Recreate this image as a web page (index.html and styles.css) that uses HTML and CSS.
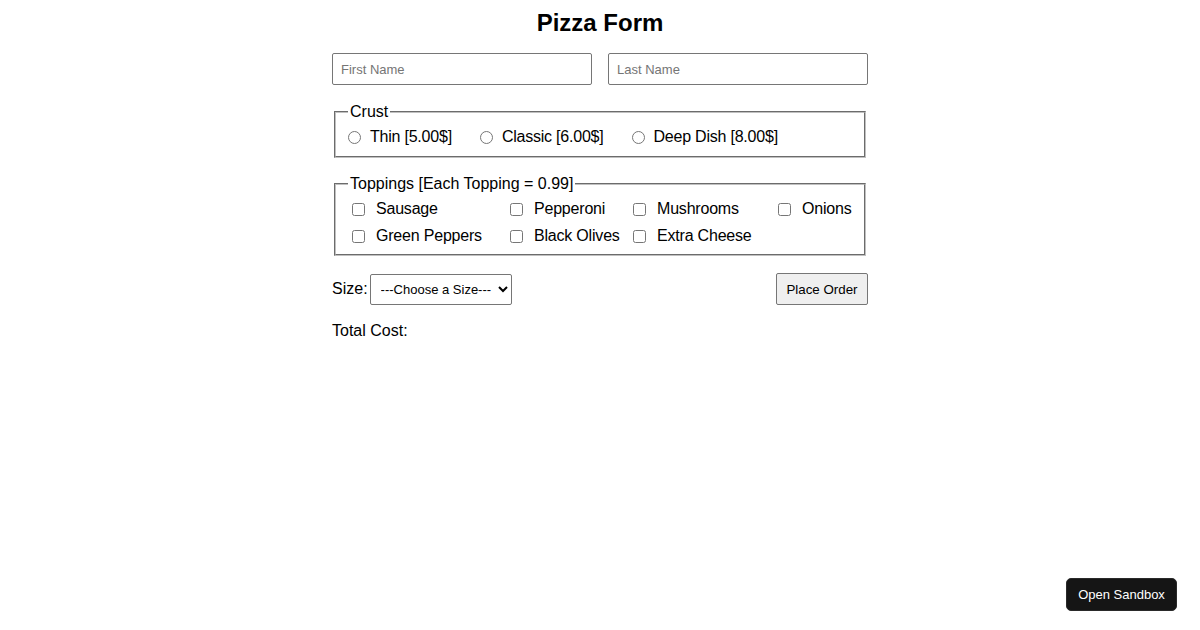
FILE: index.html
```html
<!DOCTYPE html>
<html>
<head>
<meta charset="utf-8">
<link rel="stylesheet" href="styles.css">
</head>
<body>
<div class="page">
  <h1 class="title">Pizza Form</h1>
  <div class="names">
    <input class="name-input" type="text" placeholder="First Name">
    <input class="name-input" type="text" placeholder="Last Name">
  </div>
  <fieldset class="box crust">
    <legend class="legend">Crust</legend>
    <label class="radio-item"><input type="radio" name="crust" class="radio"> Thin [5.00$]</label>
    <label class="radio-item"><input type="radio" name="crust" class="radio"> Classic [6.00$]</label>
    <label class="radio-item"><input type="radio" name="crust" class="radio"> Deep Dish [8.00$]</label>
  </fieldset>
  <fieldset class="box toppings">
    <legend class="legend">Toppings [Each Topping = 0.99]</legend>
    <div class="topping-grid">
      <label class="check-item"><input type="checkbox" class="check">Sausage</label>
      <label class="check-item"><input type="checkbox" class="check">Pepperoni</label>
      <label class="check-item"><input type="checkbox" class="check">Mushrooms</label>
      <label class="check-item"><input type="checkbox" class="check">Onions</label>
      <label class="check-item"><input type="checkbox" class="check">Green Peppers</label>
      <label class="check-item"><input type="checkbox" class="check">Black Olives</label>
      <label class="check-item"><input type="checkbox" class="check">Extra Cheese</label>
    </div>
  </fieldset>
  <div class="order-row">
    <label class="size-label">Size:
      <select class="size-select">
        <option>---Choose a Size---</option>
      </select>
    </label>
    <button class="order-btn" type="button">Place Order</button>
  </div>
  <div class="total">Total Cost:</div>
</div>
<button class="sandbox-btn" type="button">Open Sandbox</button>
</body>
</html>
```
FILE: styles.css
```css
html, body {
  margin: 0;
  padding: 0;
  background: #fff;
}
body {
  font-family: "Liberation Sans", Arial, sans-serif;
  font-size: 16px;
  color: #000;
}
.page {
  width: 536px;
  margin: 0 auto;
  padding-top: 9px;
}
.title {
  font-size: 24px;
  font-weight: bold;
  text-align: center;
  margin: 0 0 16px;
  line-height: 28px;
}
.names {
  display: flex;
  gap: 16px;
  margin-bottom: 18px;
}
.name-input {
  flex: 1;
  box-sizing: border-box;
  height: 32px;
  margin: 0;
  padding: 0 8px;
  border: 1px solid #767676;
  border-radius: 2px;
  font-family: "Liberation Sans", Arial, sans-serif;
  font-size: 13px;
}
.name-input::placeholder {
  color: #757575;
}
.box {
  margin: 0 2px 17px;
  border: 2px groove #c0c0c0;
}
.legend {
  padding: 0 2px;
  font-size: 16px;
  line-height: 18px;
}
.crust {
  display: flex;
  padding: 6px 12px 9px;
}
.toppings {
  padding: 6px 12px 8px;
}
.radio-item {
  display: inline-flex;
  align-items: center;
  margin-right: 28px;
  line-height: 20px;
  letter-spacing: -0.22px;
}
.radio {
  margin: 0 9px 0 0;
  width: 13px;
  height: 13px;
}
.topping-grid {
  display: grid;
  grid-template-columns: 158px 123px 145px auto;
  row-gap: 7px;
  padding-left: 4px;
}
.check-item {
  display: flex;
  align-items: center;
  line-height: 20px;
  letter-spacing: -0.2px;
}
.check {
  margin: 0 11px 0 0;
  width: 13px;
  height: 13px;
}
.order-row {
  display: flex;
  justify-content: space-between;
  align-items: center;
}
.size-label {
  display: flex;
  align-items: center;
  gap: 2px;
}
.size-select {
  height: 31px;
  width: 142px;
  padding: 0 0 0 6px;
  font-family: "Liberation Sans", Arial, sans-serif;
  font-size: 13px;
  border: 1px solid #767676;
  border-radius: 2px;
  background: #fff;
  color: #000;
}
.order-btn {
  height: 32px;
  padding: 0 9.5px;
  font-family: "Liberation Sans", Arial, sans-serif;
  font-size: 13.333px;
  color: #000;
  background: #efefef;
  border: 1px solid #767676;
  border-radius: 2px;
}
.total {
  margin-top: 17px;
  line-height: 18px;
}
.sandbox-btn {
  position: fixed;
  right: 23px;
  bottom: 19px;
  width: 111px;
  height: 33px;
  background: #151515;
  color: #fff;
  border: 1px solid #2a2a2a;
  border-radius: 5px;
  font-family: "Liberation Sans", Arial, sans-serif;
  font-size: 13px;
}
```
